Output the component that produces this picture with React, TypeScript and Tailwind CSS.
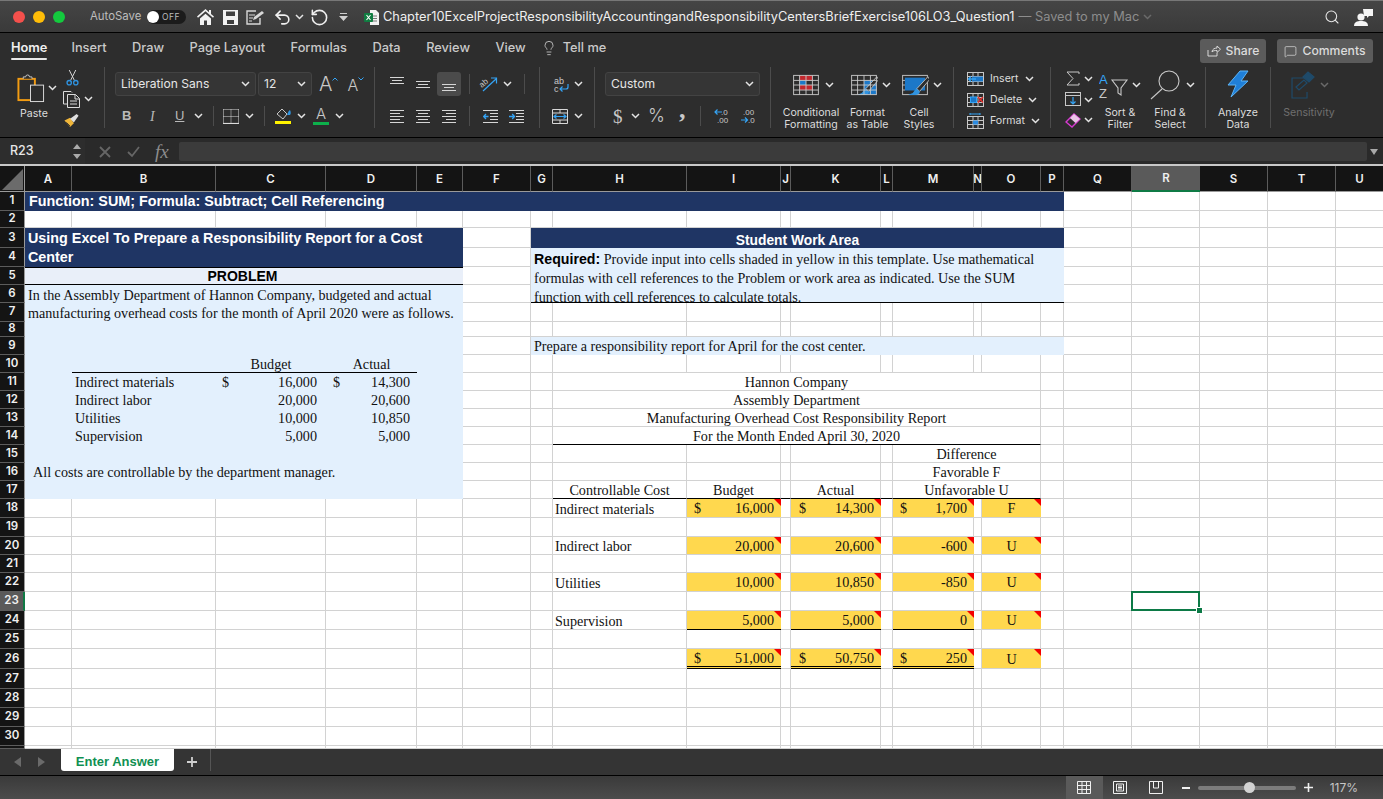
import React from "react";
import { Search, Lightbulb, MessageSquare, Undo2, RotateCcw } from "lucide-react";

const COLS = "ABCDEFGHIJKLMNOPQRSTU".split("");
const ROWH = [19,17,20,19,18,18,19,15,18,18,18,18,18,18,18,18,18,19,19,18,18,19,19,19,19,20,20,19,19,19,3];
const ci = (c: string) => COLS.indexOf(c) + 2;

function Cv({ className = "", dim = false }: { className?: string; dim?: boolean }) {
  return (
    <svg width="9" height="6" viewBox="0 0 9 6" className={`shrink-0 ${className}`} fill="none" stroke={dim ? "#6a6a6a" : "#e4e4e4"} strokeWidth="1.5">
      <path d="M1 1l3.5 3.5L8 1" />
    </svg>
  );
}

function Lines({ rows, w = 16, h = 14, color = "#d6d6d6", className = "" }: { rows: number[][]; w?: number; h?: number; color?: string; className?: string }) {
  return (
    <svg width={w} height={h} viewBox={`0 0 ${w} ${h}`} className={className} stroke={color} strokeWidth="1" fill="none">
      {rows.map((r, i) => (
        <path key={i} d={`M${r[0]} ${r[2] + 0.5}H${r[1]}`} />
      ))}
    </svg>
  );
}

function Divider({ h = "h-[20px]", className = "" }: { h?: string; className?: string }) {
  return <div className={`w-px bg-[#4c4c4c] ${h} ${className}`} />;
}
function GroupLine() {
  return <div className="w-px self-stretch bg-[#4c4c4c] shrink-0" />;
}

function Dropdown({ label, w, className = "" }: { label: string; w: string; className?: string }) {
  return (
    <div className={`flex items-center justify-between h-[24px] ${w} ${className} rounded-[3px] bg-[#353535] border border-[#434343] pl-[5px] pr-[5px] text-[12.1px] text-[#e6e6e6]`}>
      <span>{label}</span>
      <Cv />
    </div>
  );
}

function GridIcon({ children }: { children?: React.ReactNode }) {
  return (
    <svg width="28" height="22" viewBox="0 0 30 24" fill="none" className="shrink-0">
      {children}
      <g stroke="#c8c8c8" strokeWidth="1">
        <rect x="1.5" y="1.5" width="27" height="21" />
        <path d="M8 1.5v21M15 1.5v21M22 1.5v21M1.5 7h27M1.5 12h27M1.5 17.5h27" />
      </g>
    </svg>
  );
}

function BrushOver() {
  return (
    <g>
      <path d="M29 3L17 16l3 3L31 6z" fill="#2d2d2d" stroke="#bdbdbd" strokeWidth="1" />
      <path d="M17 16c-3 1-3 4-5 5-2 1-4 1-4 2h6c4 0 7-2 6-4z" fill="#2f93e0" />
    </g>
  );
}

function SmallGrid({ kind }: { kind: "ins" | "del" | "fmt" }) {
  return (
    <svg width="17" height="16" viewBox="0 0 17 16" fill="none" className="shrink-0">
      <g stroke="#c8c8c8" strokeWidth="1">
        <rect x=".5" y={kind === "fmt" ? 3.5 : 1.5} width="16" height={kind === "fmt" ? 12 : 13} />
        <path d={kind === "fmt" ? "M6 3.5v12M11 3.5v12M.5 7.5h16M.5 11.5h16" : "M6 1.5v13M11 1.5v13M.5 5.5h16M.5 10.5h16"} />
      </g>
      {kind === "ins" && <path d="M5 5.5h11v5H5z" fill="#1c78c8" />}
      {kind === "ins" && <path d="M9 8H1.5M4 5.5L1.5 8 4 10.5" stroke="#35a4f5" strokeWidth="1.3" />}
      {kind === "del" && <rect x="3.5" y="5" width="6" height="5.5" fill="#1c78c8" stroke="#35a4f5" />}
      {kind === "del" && <path d="M11 5l5 5.5M16 5l-5 5.5" stroke="#e0302d" strokeWidth="1.5" />}
      {kind === "fmt" && <rect x="6" y="7.5" width="5" height="4" fill="#2d8be0" />}
      {kind === "fmt" && <path d="M3 1h10M3 0v2M13 0v2" stroke="#35a4f5" />}
    </svg>
  );
}

function TitleBar() {
  return (
    <div className="h-[33px] shrink-0 flex items-center pt-[1px] bg-gradient-to-b from-[#454545] to-[#3a3a3a] border-t border-[#777] border-b-black border-b text-[12.8px] text-[#e0e0e0]">
      <div className="flex items-center gap-[8px] ml-[13px]">
        <span className="w-[12px] h-[12px] rounded-full bg-[#f4504c]" />
        <span className="w-[12px] h-[12px] rounded-full bg-[#ffbd08]" />
        <span className="w-[12px] h-[12px] rounded-full bg-[#14ca3e]" />
      </div>
      <span className="ml-[25px] text-[#bdbdbd] text-[11.4px] w-[50px] whitespace-nowrap">AutoSave</span>
      <div className="ml-[7px] w-[39px] h-[14px] rounded-full bg-[#1b1b1b] flex items-center">
        <span className="w-[12px] h-[12px] rounded-full bg-white" />
        <span className="ml-[3px] text-[8.5px] tracking-[0.5px] text-[#bbb]">OFF</span>
      </div>
      <svg width="17" height="16" viewBox="0 0 17 16" className="ml-[11px]" fill="#f2f2f2">
        <path d="M8.5 0L0 7.5l1 1.2L8.5 2.2 16 8.7l1-1.2-3-2.6V1h-2v2.2zM3 9.5V16h4v-4.5h3V16h4V9.5L8.5 4.7z" />
      </svg>
      <svg width="15" height="15" viewBox="0 0 15 15" className="ml-[9px]" fill="#f2f2f2">
        <path d="M0 0h15v15H0zM3 1.5V6h9V1.5zM4 10v4h7v-4z" fillRule="evenodd" />
      </svg>
      <svg width="19" height="15" viewBox="0 0 19 15" className="ml-[8px]" fill="none" stroke="#d8d8d8" strokeWidth="1.4">
        <path d="M14 8v6H1V1h9" />
        <path d="M3 5h6M3 8h4M3 11h3" strokeWidth="1" />
        <path d="M7 10l1-3 8-6 2 2-8 6z" fill="#d8d8d8" stroke="none" />
      </svg>
      <Undo2 size={19} className="ml-[8px] text-[#f0f0f0]" strokeWidth={2} />
      <Cv className="ml-[3px]" />
      <RotateCcw size={19} className="ml-[6px] text-[#f0f0f0]" strokeWidth={2} />
      <svg width="9" height="8" viewBox="0 0 9 8" className="ml-[10px]" fill="#cfcfcf">
        <path d="M1 0h7v1H1zM0 3h9L4.5 8z" />
      </svg>
      <svg width="15" height="15" viewBox="0 0 15 15" className="ml-[16px]">
        <path d="M6 0h6l3 3v12H6z" fill="#f2f2f2" />
        <path d="M8 6h5M8 8.5h5M8 11h5" stroke="#777" />
        <rect x="0" y="3" width="9" height="9" rx="1" fill="#107c41" />
        <path d="M2.5 5l4 5M6.5 5l-4 5" stroke="#fff" strokeWidth="1.1" />
      </svg>
      <span className="ml-[4px] whitespace-nowrap text-[#efefef]">Chapter10ExcelProjectResponsibilityAccountingandResponsibilityCentersBriefExercise106LO3_Question1</span>
      <span className="ml-[4px] whitespace-nowrap text-[#8d8d8d]">— Saved to my Mac</span>
      <Cv className="ml-[4px]" dim />
      <div className="ml-auto flex items-center mr-[10px] gap-[14px]">
        <Search size={16} className="text-[#e6e6e6]" strokeWidth={1.6} />
        <svg width="19" height="18" viewBox="0 0 19 18" fill="#f4f4f4">
          <circle cx="7" cy="9" r="3.6" />
          <path d="M0 18c0-4 3-5 7-5s7 1 7 5z" />
          <path d="M9 1h10v7h-4l-2 2V8h-3z" />
        </svg>
      </div>
    </div>
  );
}

function Tabs() {
  const t = ["Insert", "Draw", "Page Layout", "Formulas", "Data", "Review", "View"];
  return (
    <div className="h-[32px] flex items-center pl-[11px] pb-[2px] text-[12.8px] font-medium text-[#c9c9c9] relative">
      <div className="relative text-[#f0f0f0] font-semibold">
        Home
        <div className="absolute left-0 right-0 top-[20px] h-[2px] rounded bg-[#e8e8e8]" />
      </div>
      <div className="flex items-center gap-[25.5px] ml-[24px]">
        {t.map((x) => (
          <span key={x}>{x}</span>
        ))}
      </div>
      <Lightbulb size={16} strokeWidth={1.3} className="ml-[15px] text-[#c9c9c9]" />
      <span className="ml-[6px]">Tell me</span>
      <div className="ml-auto flex items-center gap-[11px] mr-[10px] mt-[6px] text-[12.2px] text-[#dcdcdc]">
        <div className="w-[66px] h-[24px] rounded-[3px] bg-[#5b5b5b] flex items-center justify-center gap-[5px]">
          <svg width="14" height="12" viewBox="0 0 14 12" fill="none" stroke="#d8d8d8">
            <path d="M1 5v6h9V8M5 7c0-3 3-4 5-4V1l3.5 3.2L10 7.5V5.5c-2 0-4 0-5 1.5z" />
          </svg>
          Share
        </div>
        <div className="w-[96px] h-[24px] rounded-[3px] bg-[#5b5b5b] flex items-center justify-center gap-[5px]">
          <MessageSquare size={13} strokeWidth={1.3} />
          Comments
        </div>
      </div>
    </div>
  );
}

function G1() {
  return (
    <div className="w-[104px] shrink-0 flex text-[10.6px] text-[#dcdcdc]">
      <div className="ml-[17px] flex flex-col">
        <div className="flex items-center h-[34px] mt-[4px]">
          <svg width="28" height="29" viewBox="0 0 28 30" fill="none">
            <rect x="1" y="5" width="17" height="22" stroke="#f39c12" strokeWidth="2" />
            <path d="M6 5V3h2.5a2 2 0 014 0H15v2" stroke="#c6c6c6" fill="#2d2d2d" />
            <rect x="13.5" y="11.5" width="13.5" height="17" fill="#2d2d2d" stroke="#dcdcdc" />
          </svg>
          <Cv className="ml-[3px]" />
        </div>
        <span className="mt-[1px] ml-[3px]">Paste</span>
      </div>
      <div className="ml-[6px] mt-[3px] flex flex-col gap-[5px]">
        <svg width="15" height="17" viewBox="0 0 15 17" fill="none" className="ml-[2px]">
          <path d="M4 0l5.5 11M11 0L5.5 11" stroke="#dcdcdc" />
          <circle cx="4" cy="13.5" r="2.3" stroke="#2f93e0" strokeWidth="1.4" />
          <circle cx="11" cy="13.5" r="2.3" stroke="#2f93e0" strokeWidth="1.4" />
        </svg>
        <div className="flex items-center">
          <svg width="17" height="17" viewBox="0 0 17 17" fill="none" stroke="#dcdcdc">
            <path d="M4 13H.5V.5H8l1 1" />
            <path d="M4.5 3.5h8l4 4v9h-12zM12 3.5V8h4.5M7 10h7M7 13h7" fill="#2d2d2d" />
          </svg>
          <Cv className="ml-[4px]" />
        </div>
        <svg width="17" height="16" viewBox="0 0 17 16" fill="none">
          <path d="M1 8l6 7 4-4-4-6z" fill="#f0b63a" />
          <path d="M7 6l4 4 5-7-2-2z" fill="#e0e0e0" />
          <path d="M3 10l4 4" stroke="#2d2d2d" />
        </svg>
      </div>
    </div>
  );
}

function G2() {
  return (
    <div className="w-[269px] shrink-0 pl-[10px] flex flex-col gap-[8px] text-[#c8c8c8]">
      <div className="flex items-center h-[24px]">
        <Dropdown label="Liberation Sans" w="w-[141px]" />
        <Dropdown label="12" w="w-[54px]" className="ml-[2px]" />
        <span className="ml-[7px] text-[20px] font-light leading-none">A</span>
        <svg width="6" height="4" viewBox="0 0 6 4" fill="none" stroke="#35a4f5" className="-mt-[10px]">
          <path d="M.5 3.5L3 1l2.5 2.5" />
        </svg>
        <span className="ml-[9px] text-[16px] font-light leading-none mt-[2px]">A</span>
        <svg width="6" height="4" viewBox="0 0 6 4" fill="none" stroke="#35a4f5" className="-mt-[10px]">
          <path d="M.5.5L3 3l2.5-2.5" />
        </svg>
      </div>
      <div className="flex items-center h-[24px]">
        <span className="ml-[7px] w-[9px] font-bold text-[13px] font-['Liberation_Sans',sans-serif] text-[#b9b9b9]">B</span>
        <span className="ml-[19px] w-[6px] italic text-[14px] font-['Liberation_Serif',serif] text-[#b9b9b9]">I</span>
        <span className="ml-[19px] w-[10px] underline text-[13px] font-['Liberation_Sans',sans-serif] text-[#b9b9b9]">U</span>
        <Cv className="ml-[9px]" />
        <Divider className="ml-[10px]" />
        <svg width="16" height="15" viewBox="0 0 16 15" fill="none" className="ml-[9px]" stroke="#dcdcdc">
          <path d="M.5.5h15M.5.5v14M15.500.5v14M.5 7.5h15M8 .5v14" strokeDasharray="1 1" />
          <path d="M0 14.5h16" strokeWidth="1.2" />
        </svg>
        <Cv className="ml-[6px]" />
        <Divider className="ml-[10px]" />
        <div className="ml-[10px] flex flex-col items-center w-[16px]">
          <svg width="15" height="12" viewBox="0 0 15 12" fill="none">
            <path d="M1 6l5-5 5 5-4 5z" stroke="#c8c8c8" />
            <path d="M11 7c1-2 1-4 3-5 1 2 1 4 0 5z" fill="#2f93e0" />
          </svg>
          <div className="w-[16px] h-[3px] mt-[1px] bg-[#fff200]" />
        </div>
        <Cv className="ml-[6px]" />
        <div className="ml-[7px] flex flex-col items-center w-[16px]">
          <span className="text-[15px] leading-[12px] font-light text-[#c8c8c8]">A</span>
          <div className="w-[16px] h-[3px] mt-[2px] bg-[#0db04b]" />
        </div>
        <Cv className="ml-[6px]" />
      </div>
    </div>
  );
}

function G3() {
  const tl = [[0, 14, 0], [2, 12, 3], [0, 14, 6]];
  const ml = [[0, 14, 4], [2, 12, 7], [0, 14, 10]];
  const bl = [[0, 14, 7], [2, 12, 10], [0, 14, 13]];
  const a1 = [[0, 14, 1], [0, 10, 4], [0, 14, 7], [0, 10, 10], [0, 14, 13]];
  const a2 = [[0, 14, 1], [2, 12, 4], [0, 14, 7], [2, 12, 10], [0, 14, 13]];
  const a3 = [[0, 14, 1], [4, 14, 4], [0, 14, 7], [4, 14, 10], [0, 14, 13]];
  return (
    <div className="w-[164px] shrink-0 flex flex-col gap-[8px]">
      <div className="flex items-center h-[24px]">
        <Lines rows={tl} w={14} className="ml-[15px]" />
        <Lines rows={ml} w={14} className="ml-[12px]" />
        <div className="ml-[7px] w-[24px] h-[24px] rounded-[3px] bg-[#4b4b4b] flex items-center justify-center">
          <Lines rows={bl} w={14} />
        </div>
        <Divider className="ml-[8px]" />
        <svg width="18" height="16" viewBox="0 0 18 16" fill="none" className="ml-[10px] overflow-visible">
          <text x="0" y="9" fontSize="8" fill="#c8c8c8" transform="rotate(-40 5 8)" fontFamily="Liberation Sans">ab</text>
          <path d="M3 15L16 3M11 2h5.5v5.5" stroke="#35a4f5" strokeWidth="1.2" />
        </svg>
        <Cv className="ml-[5px]" />
        <Divider className="ml-[12px]" />
      </div>
      <div className="flex items-center h-[24px]">
        <Lines rows={a1} w={14} className="ml-[15px]" />
        <Lines rows={a2} w={14} className="ml-[12px]" />
        <Lines rows={a3} w={14} className="ml-[12px]" />
        <Divider className="ml-[13px]" />
        <svg width="15" height="14" viewBox="0 0 15 14" fill="none" className="ml-[13px]">
          <path d="M0 1.5h15M7 4.5h8M7 7.5h8M7 10.5h8M0 13.5h15" stroke="#d6d6d6" />
          <path d="M5.5 7.5H1M3 5L.7 7.5 3 10" stroke="#35a4f5" strokeWidth="1.3" />
        </svg>
        <svg width="15" height="14" viewBox="0 0 15 14" fill="none" className="ml-[11px]">
          <path d="M0 1.5h15M7 4.5h8M7 7.5h8M7 10.5h8M0 13.5h15" stroke="#d6d6d6" />
          <path d="M0 7.5h5M3.2 5l2.3 2.5L3.2 10" stroke="#35a4f5" strokeWidth="1.3" />
        </svg>
      </div>
    </div>
  );
}

function G4() {
  return (
    <div className="w-[54px] shrink-0 flex flex-col gap-[8px]">
      <div className="flex items-center h-[24px] pl-[13px]">
        <svg width="17" height="17" viewBox="0 0 17 17" fill="none">
          <text x="1" y="8" fontSize="9" fill="#c8c8c8" fontFamily="Liberation Sans">ab</text>
          <text x="1" y="16" fontSize="9" fill="#c8c8c8" fontFamily="Liberation Sans">c</text>
          <path d="M15 8v3a2 2 0 01-2 2H7M9.5 10.5L7 13l2.5 2.5" stroke="#35a4f5" strokeWidth="1.2" />
        </svg>
        <Cv className="ml-[4px]" />
      </div>
      <div className="flex items-center h-[24px] pl-[12px]">
        <svg width="16" height="15" viewBox="0 0 16 15" fill="none">
          <path d="M.5.5h15v14H.5zM.5 4h15M.5 11h15M8 .5V4M8 11v3.500" stroke="#d8d8d8" />
          <path d="M2 7.500h12M4.500 5.500l-2.500 2 2.500 2M11.500 5.500l2.500 2-2.500 2" stroke="#35a4f5" strokeWidth="1.200" />
        </svg>
        <Cv className="ml-[6px]" />
      </div>
    </div>
  );
}

function G5() {
  return (
    <div className="w-[175px] shrink-0 flex flex-col gap-[8px] pl-[10px]">
      <Dropdown label="Custom" w="w-[155px]" />
      <div className="flex items-center h-[24px] text-[#c8c8c8]">
        <span className="ml-[8px] w-[10px] text-[19px] font-light leading-none font-['Liberation_Serif',serif]">$</span>
        <Cv className="ml-[8px]" />
        <span className="ml-[8px] w-[17px] text-[18px] font-light leading-none">%</span>
        <span className="ml-[14px] w-[6px] text-[26px] font-bold leading-none font-['Liberation_Serif',serif] -mt-[12px]">,</span>
        <Divider className="ml-[15px]" />
        <svg width="17" height="16" viewBox="0 0 17 16" className="ml-[13px]" fill="none">
          <text x="7" y="7" fontSize="8" fill="#c8c8c8" fontFamily="Liberation Sans">.0</text>
          <text x="3" y="15" fontSize="8" fill="#c8c8c8" fontFamily="Liberation Sans">.00</text>
          <path d="M8 4H1M3.500 1.500L1 4l2.500 2.500" stroke="#35a4f5" strokeWidth="1.200" />
        </svg>
        <svg width="17" height="16" viewBox="0 0 17 16" className="ml-[9px]" fill="none">
          <text x="3" y="7" fontSize="8" fill="#c8c8c8" fontFamily="Liberation Sans">.00</text>
          <text x="8" y="15" fontSize="8" fill="#c8c8c8" fontFamily="Liberation Sans">.0</text>
          <path d="M1 12h6.500M5 9.500L7.500 12 5 14.500" stroke="#35a4f5" strokeWidth="1.200" />
        </svg>
      </div>
    </div>
  );
}

function BigBtn({ icon, l1, l2, w, className = "", dim = false }: { icon: React.ReactNode; l1: string; l2?: string; w: string; className?: string; dim?: boolean }) {
  return (
    <div className={`flex flex-col items-center shrink-0 ${w} ${className}`}>
      <div className="h-[33px] shrink-0 flex items-center justify-center">{icon}</div>
      <div className={`mt-[6px] shrink-0 text-[10.6px] leading-[12px] text-center whitespace-nowrap ${dim ? "text-[#6f6f6f]" : "text-[#dcdcdc]"}`}>
        {l1}
        {l2 && <br />}
        {l2}
      </div>
    </div>
  );
}

function G6() {
  return (
    <div className="w-[182px] shrink-0 flex pl-[12px]">
      <BigBtn
        w="w-[56px]"
        l1="Conditional"
        l2="Formatting"
        icon={
          <div className="flex items-center ml-[4px]">
            <GridIcon>
              <rect x="8" y="1.500" width="14" height="5.500" fill="#c1272d" />
              <rect x="8" y="7" width="7" height="5" fill="#1c78c8" />
              <rect x="8" y="12" width="14" height="5.500" fill="#c1272d" />
            </GridIcon>
            <Cv className="ml-[5px]" />
          </div>
        }
      />
      <BigBtn
        w="w-[53px]"
        className="ml-[2px]"
        l1="Format"
        l2="as Table"
        icon={
          <div className="flex items-center ml-[6px]">
            <GridIcon>
              <rect x="15" y="7" width="13.500" height="15.500" fill="#1c78c8" />
              <BrushOver />
            </GridIcon>
            <Cv className="ml-[4px]" />
          </div>
        }
      />
      <BigBtn
        w="w-[46px]"
        className="ml-[2px]"
        l1="Cell"
        l2="Styles"
        icon={
          <div className="flex items-center ml-[4px]">
            <svg width="28" height="22" viewBox="0 0 30 24" fill="none">
              <rect x="1.500" y="1.500" width="27" height="21" stroke="#c8c8c8" />
              <rect x="4" y="4" width="22" height="14" fill="#1c78c8" />
              <path d="M1.500 7h2.500M1.500 12h2.500M1.500 17.500h2.500" stroke="#c8c8c8" />
              <BrushOver />
            </svg>
            <Cv className="ml-[4px]" />
          </div>
        }
      />
    </div>
  );
}

function G7() {
  const rows: [string, "ins" | "del" | "fmt"][] = [
    ["Insert", "ins"],
    ["Delete", "del"],
    ["Format", "fmt"],
  ];
  return (
    <div className="w-[96px] shrink-0 flex flex-col gap-[5px] pl-[13px] pt-[3px] text-[10.6px] text-[#dcdcdc]">
      {rows.map(([l, k]) => (
        <div key={l} className="flex items-center h-[17px]">
          <SmallGrid kind={k} />
          <span className="ml-[6px]">{l}</span>
          <Cv className="ml-[6px]" />
        </div>
      ))}
    </div>
  );
}

function G8() {
  return (
    <div className="w-[154px] shrink-0 flex text-[#dcdcdc]">
      <div className="ml-[15px] flex flex-col gap-[5px] pt-[3px] w-[28px]">
        <div className="flex items-center h-[17px]">
          <svg width="14" height="15" viewBox="0 0 14 15" fill="none" stroke="#c8c8c8">
            <path d="M13 3V1H1l6 6.500L1 14h12v-2" />
          </svg>
          <Cv className="ml-[4px]" />
        </div>
        <div className="flex items-center h-[17px]">
          <svg width="17" height="15" viewBox="0 0 17 15" fill="none" className="-ml-[1px]">
            <rect x=".5" y=".5" width="15" height="13" stroke="#c8c8c8" />
            <path d="M.5 3.500h15" stroke="#c8c8c8" />
            <path d="M8 5v7M5.500 9.500L8 12l2.500-2.500" stroke="#35a4f5" strokeWidth="1.200" />
          </svg>
          <Cv className="ml-[2px]" />
        </div>
        <div className="flex items-center h-[17px]">
          <svg width="16" height="15" viewBox="0 0 16 15" fill="none" className="-ml-[1px]">
            <path d="M1 9l8-8 6 5-8 8z" stroke="#d63ad0" strokeWidth="1.400" />
            <path d="M5 5l5.500 5 4.500-4-6-5z" fill="#e9c3e6" />
          </svg>
          <Cv className="ml-[3px]" />
        </div>
      </div>
      <BigBtn
        w="w-[50px]"
        className="ml-[1px]"
        l1="Sort &"
        l2="Filter"
        icon={
          <div className="flex items-center">
            <svg width="30" height="30" viewBox="0 0 30 30" fill="none">
              <text x="0" y="14" fontSize="13" fill="#35a4f5" fontFamily="Liberation Sans">A</text>
              <text x="0" y="28" fontSize="13" fill="#c8c8c8" fontFamily="Liberation Sans">Z</text>
              <path d="M13 10h15l-6 8v7l-3-2v-5z" stroke="#c8c8c8" strokeWidth="1.100" />
            </svg>
            <Cv className="ml-[3px]" />
          </div>
        }
      />
      <BigBtn
        w="w-[50px]"
        l1="Find &"
        l2="Select"
        icon={
          <div className="flex items-center ml-[4px]">
            <svg width="30" height="30" viewBox="0 0 30 30" fill="none" stroke="#c8c8c8" strokeWidth="1.100">
              <circle cx="19" cy="11" r="10" />
              <path d="M12 19L1 29" />
            </svg>
            <Cv className="ml-[6px]" />
          </div>
        }
      />
    </div>
  );
}

const headText = "flex items-center justify-center text-[11.5px] font-semibold text-[#f0f0f0] font-['Inter','Liberation_Sans',sans-serif] overflow-hidden";

function Sheet() {
  const gridCells: React.ReactNode[] = [];
  const pos = (col: number, row: number) => ({ gridColumn: col, gridRow: row });
  gridCells.push(
    <div key="corner" style={pos(1, 1)} className="border-r border-b border-[#9a9a9a] bg-[#141414] flex items-end justify-end pr-[1px] pb-[1px]">
      <svg width="21" height="21" viewBox="0 0 21 21"><path d="M21 0v21H0z" fill="#6b6b6b" /></svg>
    </div>
  );
  COLS.forEach((c, ic) => {
    gridCells.push(
      c === "R" ? (
        <div key={c} style={pos(ic + 2, 1)} className={`bg-[#5a5a5a] border-b-2 border-[#0f7a45] pt-[2px] ${headText}`}>{c}</div>
      ) : (
        <div key={c} style={pos(ic + 2, 1)} className={`bg-[#141414] border-r border-b border-r-[#5c5c5c] border-b-[#9a9a9a] pt-[2px] ${headText}`}>{c}</div>
      )
    );
  });
  ROWH.forEach((_, i) => {
    const r = i + 1;
    gridCells.push(
      <div key={`h${r}`} style={pos(1, r + 1)} className={`${r === 23 ? "bg-[#5a5a5a] border-r-2 border-r-[#0f7a45]" : "bg-[#141414] border-r border-r-[#9a9a9a]"} border-b border-b-[#5c5c5c] ${headText}`}>
        {r < 31 ? r : ""}
      </div>
    );
    COLS.forEach((c, ic) => {
      gridCells.push(<div key={c + r} style={pos(ic + 2, r + 1)} className="bg-white border-r border-b border-[#d2d2d2]" />);
    });
  });

  const S = ({ c1, c2, r1, r2, className = "", children }: { c1: string; c2?: string; r1: number; r2?: number; className?: string; children?: React.ReactNode }) => (
    <div
      style={{ gridColumn: `${ci(c1)} / ${ci(c2 ?? c1) + 1}`, gridRow: `${r1 + 1} / ${(r2 ?? r1) + 2}` }}
      className={`relative min-w-0 whitespace-nowrap ${className}`}
    >
      {children}
    </div>
  );

  const navy = "bg-[#1f3564] text-white font-bold text-[14.35px] font-['Liberation_Sans',Arial,sans-serif]";
  const lb = "bg-[#e3f0fd]";
  const tri = <span className="absolute top-0 right-0 border-t-[7px] border-l-[7px] border-t-[#f30000] border-l-transparent" />;
  const yb = (r: number) => (r === 26 ? "pt-[2px] border-b-[3px] border-double border-black" : r === 24 ? "pt-[1px] border-b border-black" : "pt-[1px] border-b border-[#d2d2d2]");

  const data: [string, string, string, string, string][] = [
    ["16,000", "14,300", "1,700", "F", "Indirect materials"],
    ["20,000", "20,600", "-600", "U", "Indirect labor"],
    ["10,000", "10,850", "-850", "U", "Utilities"],
    ["5,000", "5,000", "0", "U", "Supervision"],
    ["51,000", "50,750", "250", "U", ""],
  ];
  const left: [string, string, string, boolean][] = [
    ["Indirect materials", "16,000", "14,300", true],
    ["Indirect labor", "20,000", "20,600", false],
    ["Utilities", "10,000", "10,850", false],
    ["Supervision", "5,000", "5,000", false],
  ];

  return (
    <div className="h-[583px] overflow-hidden shrink-0 grid grid-cols-[25px_47px_144px_110px_91px_46px_68px_22px_134px_94px_10px_90px_12px_81px_8px_59px_23px_68px_68px_68px_68px_48px] grid-rows-[26px_19px_17px_20px_19px_18px_18px_19px_15px_18px_18px_18px_18px_18px_18px_18px_18px_18px_19px_19px_18px_18px_19px_19px_19px_19px_20px_20px_19px_19px_19px_3px] font-['Liberation_Serif','Times_New_Roman',serif] text-[14.15px] text-[#111] leading-none">
      {gridCells}

      <S c1="A" c2="P" r1={1} className={`${navy} flex items-center pl-[4px]`}>Function: SUM; Formula: Subtract; Cell Referencing</S>

      <S c1="A" c2="E" r1={3} r2={4} className={`${navy} pl-[3px] pt-[1px] leading-[19px] whitespace-normal`}>
        Using Excel To Prepare a Responsibility Report for a Cost
        <br />
        Center
      </S>
      <S c1="A" c2="E" r1={5} className="bg-[#e9eff9] border-y border-black flex items-center justify-center pr-[3px] font-['Liberation_Sans',Arial,sans-serif] font-bold text-[14px] text-black">PROBLEM</S>
      <S c1="A" c2="E" r1={6} r2={17} className={lb} />
      <S c1="A" c2="E" r1={6} r2={7} className="pl-[3px] pt-[1px] leading-[18px]">
        In the Assembly Department of Hannon Company, budgeted and actual
        <br />
        manufacturing overhead costs for the month of April 2020 were as follows.
      </S>
      <S c1="B" c2="D" r1={10} className="border-b border-black" />
      <S c1="C" r1={10} className="flex items-center justify-center">Budget</S>
      <S c1="D" r1={10} className="flex items-center justify-center">Actual</S>
      {left.map(([l, b, a, d], i) => (
        <React.Fragment key={l}>
          <S c1="B" r1={11 + i} className="flex items-center pl-[3px]">{l}</S>
          <S c1="C" r1={11 + i} className="flex items-center justify-between pl-[6px] pr-[9px]">
            <span>{d ? "$" : ""}</span>
            <span>{b}</span>
          </S>
          <S c1="D" r1={11 + i} className="flex items-center justify-between pl-[7px] pr-[7px]">
            <span>{d ? "$" : ""}</span>
            <span>{a}</span>
          </S>
        </React.Fragment>
      ))}
      <S c1="A" c2="E" r1={16} className="flex items-center pl-[8px]">All costs are controllable by the department manager.</S>

      <S c1="G" c2="P" r1={3} className={`${navy} flex items-end justify-center !text-[13.8px]`}>Student Work Area</S>
      <S c1="G" c2="P" r1={4} r2={6} className={`${lb} border-b border-black pl-[3px] pt-[2px] leading-[19px]`}>
        <span className="font-['Liberation_Sans',Arial,sans-serif] font-bold text-[14.2px] text-black">Required:</span> Provide input into cells shaded in yellow in this template. Use mathematical
        <br />
        formulas with cell references to the Problem or work area as indicated. Use the SUM
        <br />
        function with cell references to calculate totals.
      </S>
      <S c1="G" c2="P" r1={9} className={`${lb} flex items-center pl-[3px]`}>Prepare a responsibility report for April for the cost center.</S>

      {["Hannon Company", "Assembly Department", "Manufacturing Overhead Cost Responsibility Report", "For the Month Ended April 30, 2020"].map((t, i) => (
        <S key={t} c1="H" c2="O" r1={11 + i} className={`bg-white flex items-center justify-center pt-[1px] border-b border-r border-r-[#d2d2d2] ${i === 3 ? "border-b-black" : "border-b-[#d2d2d2]"}`}>{t}</S>
      ))}
      {["Difference", "Favorable F", "Unfavorable U"].map((t, i) => (
        <S key={t} c1="M" c2="O" r1={15 + i} className={`bg-white flex items-center justify-center pt-[1px] border-b border-r border-r-[#d2d2d2] ${i === 2 ? "border-b-black" : "border-b-[#d2d2d2]"}`}>{t}</S>
      ))}
      <S c1="H" r1={17} className="border-b border-r border-b-black border-r-[#d2d2d2] flex items-center justify-center pt-[1px]">Controllable Cost</S>
      <S c1="I" r1={17} className="border-b border-r border-b-black border-r-[#d2d2d2] flex items-center justify-center pt-[1px]">Budget</S>
      <S c1="J" r1={17} className="border-b border-r border-b-black border-r-[#d2d2d2]" />
      <S c1="K" r1={17} className="border-b border-r border-b-black border-r-[#d2d2d2] flex items-center justify-center pt-[1px]">Actual</S>
      <S c1="L" r1={17} className="border-b border-r border-b-black border-r-[#d2d2d2]" />

      {data.map(([b, a, d, f, l], i) => {
        const r = 18 + i * 2;
        const dollar = i === 0 || i === 4;
        return (
          <React.Fragment key={r}>
            {l && <S c1="H" r1={r} className="flex items-center pl-[2px] pt-[1px]">{l}</S>}
            <S c1="I" r1={r} className={`bg-[#ffd84e] flex items-center justify-between pl-[7px] pr-[7px] ${yb(r)}`}>
              <span>{dollar ? "$" : ""}</span>
              <span>{b}</span>
              {tri}
            </S>
            <S c1="K" r1={r} className={`bg-[#ffd84e] flex items-center justify-between pl-[8px] pr-[7px] ${yb(r)}`}>
              <span>{dollar ? "$" : ""}</span>
              <span>{a}</span>
              {tri}
            </S>
            <S c1="M" r1={r} className={`bg-[#ffd84e] flex items-center justify-between pl-[7px] pr-[7px] ${yb(r)}`}>
              <span>{dollar ? "$" : ""}</span>
              <span>{d}</span>
              {tri}
            </S>
            <S c1="O" r1={r} className="bg-[#ffd84e] flex items-center justify-center pt-[1px] border-b border-[#d2d2d2]">
              {f}
              {tri}
            </S>
          </React.Fragment>
        );
      })}

      <S c1="R" r1={23}>
        <div className="absolute -left-[1px] -top-[1px] right-0 bottom-0 border-2 border-[#0c7a46]" />
        <div className="absolute -right-[2px] -bottom-[2px] w-[5px] h-[5px] bg-[#0c7a46] outline outline-1 outline-white" />
      </S>
    </div>
  );
}

function Tabbar() {
  return (
    <div className="h-[27px] bg-[#343434] border-b border-black flex items-stretch shrink-0">
      <div className="w-[61px] flex items-center pl-[14px] gap-[15px]">
        <svg width="8" height="10" viewBox="0 0 8 10" fill="#6a6a6a"><path d="M7 0v10L0 5z" /></svg>
        <svg width="8" height="10" viewBox="0 0 8 10" fill="#6a6a6a"><path d="M1 0v10l7-5z" /></svg>
      </div>
      <div className="w-[113px] h-[22px] rounded-b-[3px] bg-white flex items-center justify-center pt-[3px] text-[13px] font-bold text-[#0f9052] font-['Liberation_Sans',Arial,sans-serif]">Enter Answer</div>
      <div className="w-[37px] h-[22px] flex items-center justify-center pt-[3px] border-r border-[#555]">
        <svg width="12" height="12" viewBox="0 0 12 12" stroke="#cfcfcf" strokeWidth="1.800"><path d="M6 1v10M1 6h10" /></svg>
      </div>
    </div>
  );
}

function Statusbar() {
  return (
    <div className="flex-1 bg-gradient-to-b from-[#3a3a3a] to-[#4c4c4c] flex items-center text-[#c6c6c6] text-[12px]">
      <div className="ml-auto flex items-center h-full">
        <div className="w-[37px] h-full bg-[#5a5a5a] flex items-center justify-center">
          <svg width="14" height="13" viewBox="0 0 14 13" fill="none" stroke="#f0f0f0"><path d="M.5.500h13v12H.500zM5 .5v12M9.500.5v12M.5 4.500h13M.5 8.500h13" /></svg>
        </div>
        <svg width="14" height="13" viewBox="0 0 14 13" fill="none" stroke="#f0f0f0" className="ml-[10px]"><path d="M.5.500h13v12H.500zM3.500 3h7v7h-7zM5 5h4M5 6.500h4M5 8h4" /></svg>
        <svg width="14" height="13" viewBox="0 0 14 13" fill="none" stroke="#f0f0f0" className="ml-[22px]"><path d="M.5.500h13v12H.500zM4.500.5v6.500h5V.5" /></svg>
        <div className="ml-[19px] w-[8px] h-[2px] bg-[#f0f0f0]" />
        <div className="ml-[8px] w-[98px] h-[4px] rounded-full bg-[#7c7c7c] relative">
          <div className="absolute left-[46px] -top-[3.500px] w-[11px] h-[11px] rounded-full bg-[#d2d2d2]" />
        </div>
        <svg width="9" height="9" viewBox="0 0 9 9" stroke="#f0f0f0" strokeWidth="1.600" className="ml-[8px]"><path d="M4.500 0v9M0 4.500h9" /></svg>
        <span className="ml-[17px] mr-[25px]">117%</span>
      </div>
    </div>
  );
}

export default function App() {
  return (
    <div className="w-[1383px] h-[799px] overflow-hidden flex flex-col bg-[#2d2d2d] font-['Inter','Liberation_Sans',sans-serif] select-none">
      <TitleBar />
      <div className="bg-[#2d2d2d] shrink-0">
        <Tabs />
        <div className="h-[73px] flex pt-[2px] pb-[9px] border-b border-black">
          <G1 />
          <GroupLine />
          <div className="flex pt-[5px]"><G2 /></div>
          <GroupLine />
          <div className="flex pt-[5px]"><G3 /></div>
          <GroupLine />
          <div className="flex pt-[5px]"><G4 /></div>
          <GroupLine />
          <div className="flex pt-[5px]"><G5 /></div>
          <GroupLine />
          <div className="flex pt-[1px]"><G6 /></div>
          <GroupLine />
          <div className="flex pt-[1px]"><G7 /></div>
          <GroupLine />
          <div className="flex pt-[1px]"><G8 /></div>
          <GroupLine />
          <BigBtn
            w="w-[64px]"
            className="pt-[1px]"
            l1="Analyze"
            l2="Data"
            icon={
              <svg width="22" height="28" viewBox="0 0 22 28" className="-mt-[2px]" fill="#1f7fd8" stroke="#5cb3f5" strokeWidth="1">
                <path d="M13 1h8l-7 10h7L4 27l5-12H1z" />
              </svg>
            }
          />
          <GroupLine />
          <div className="flex ml-[21px] pt-[1px]">
            <BigBtn
              dim
              w="w-[54px]"
              className="-ml-[10px]"
              l1="Sensitivity"
              icon={
                <div className="flex items-center ml-[2px]">
                  <svg width="27" height="28" viewBox="0 0 27 28" fill="none" stroke="#1f4a69" strokeWidth="1.200">
                    <path d="M16 7H1v20h15v-6" />
                    <path d="M5 16l8-7 3 3-8 7z" />
                    <path d="M12 6l5-5 6 5-5 5z" fill="#1f4a69" />
                  </svg>
                  <Cv dim className="ml-[2px]" />
                </div>
              }
            />
          </div>
        </div>
      </div>
      <div className="h-[28px] shrink-0 flex bg-[#2a2a2a] pt-[4px] pb-[3px] border-b-[2px] border-[#c8c8c8]">
        <div className="w-[85px] flex items-center justify-between pl-[10px] pr-[4px] -mt-[4px] -mb-[3px] bg-[#2d2d2d] text-[12.5px] font-medium text-[#e6e6e6]">
          R23
          <svg width="8" height="15" viewBox="0 0 8 15" fill="#aaa"><path d="M4 0l4 5H0zM4 15l4-5H0z" /></svg>
        </div>
        <svg width="12" height="12" viewBox="0 0 12 12" stroke="#666" strokeWidth="1.800" className="ml-[14px] self-center"><path d="M1 1l10 10M11 1L1 11" /></svg>
        <svg width="13" height="12" viewBox="0 0 13 12" stroke="#666" strokeWidth="1.800" fill="none" className="ml-[16px] self-center"><path d="M1 6l4 4 7-9" /></svg>
        <span className="ml-[15px] self-center text-[19px] leading-none italic text-[#8d8d8d] font-['Liberation_Serif',serif] w-[15px]">fx</span>
        <div className="ml-[9px] w-[1188px] bg-[#3b3b3b] rounded-[2px]" />
        <svg width="8" height="6" viewBox="0 0 8 6" fill="#a8a8a8" className="ml-[3px] self-center"><path d="M0 0h8L4 6z" /></svg>
      </div>
      <Sheet />
      <Tabbar />
      <Statusbar />
    </div>
  );
}
